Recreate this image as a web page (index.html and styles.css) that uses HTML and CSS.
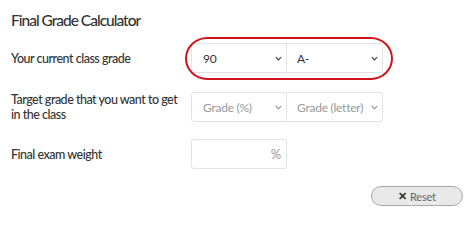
FILE: index.html
```html
<!DOCTYPE html>
<html>
<head>
<meta charset="utf-8">
<link rel="stylesheet" href="styles.css">
</head>
<body>
<div class="calc">
  <h1 class="title">Final Grade Calculator</h1>
  <div class="row row-first">
    <div class="label">Your current class grade</div>
    <div class="pair highlighted">
      <div class="box select"><span class="val">90</span><svg class="chev" viewBox="0 0 8 5"><path d="M1 1l3 3 3-3" fill="none" stroke="#444" stroke-width="1.4"/></svg></div>
      <div class="box select joined"><span class="val">A-</span><svg class="chev" viewBox="0 0 8 5"><path d="M1 1l3 3 3-3" fill="none" stroke="#444" stroke-width="1.4"/></svg></div>
      <div class="ring"></div>
    </div>
  </div>
  <div class="row row-second">
    <div class="label">Target grade that you want to get in the class</div>
    <div class="pair">
      <div class="box select"><span class="ph">Grade (%)</span><svg class="chev" viewBox="0 0 8 5"><path d="M1 1l3 3 3-3" fill="none" stroke="#888" stroke-width="1.2"/></svg></div>
      <div class="box select joined"><span class="ph">Grade (letter)</span><svg class="chev" viewBox="0 0 8 5"><path d="M1 1l3 3 3-3" fill="none" stroke="#888" stroke-width="1.2"/></svg></div>
    </div>
  </div>
  <div class="row row-third">
    <div class="label">Final exam weight</div>
    <div class="box pct"><span class="ph">%</span></div>
  </div>
  <div class="actions">
    <button class="reset"><span class="x">✕</span> Reset</button>
  </div>
</div>
</body>
</html>
```
FILE: styles.css
```css
* { box-sizing: border-box; }
html, body { margin: 0; padding: 0; background: #fff; }
body { font-family: Lato, "Open Sans", sans-serif; color: #333; }
.calc { padding: 9px 11px 0 11px; width: 474px; }
.title { margin: 0; font-size: 15.5px; font-weight: 500; letter-spacing: -1px; line-height: 22px; color: #333; }
.row { display: flex; align-items: center; }
.row-first { margin-top: 12px; }
.row-second { margin-top: 19px; }
.row-third { margin-top: 17px; }
.label { width: 180px; font-size: 12.5px; font-weight: 500; letter-spacing: -0.5px; line-height: 15px; color: #333; padding-right: 4px; }
.pair { display: flex; position: relative; }
.box { width: 96px; height: 30px; border: 1px solid #e2e2e2; border-radius: 3px; background: #fff; display: flex; align-items: center; font-size: 12px; letter-spacing: -0.25px; }
.select { padding: 0 4px 0 11px; justify-content: space-between; }
.pair .box:first-child { border-top-right-radius: 0; border-bottom-right-radius: 0; }
.joined { border-left: none; border-top-left-radius: 0; border-bottom-left-radius: 0; padding-left: 10px; }
.val { color: #333; }
.ph { color: #999; }
.chev { width: 7px; height: 5px; }
.ring { position: absolute; left: -6px; top: -6px; right: -10px; bottom: -7px; border: 2px solid #d0141c; border-radius: 22px / 50%; pointer-events: none; }
.pct { justify-content: flex-end; padding-right: 5px; font-size: 13px; }
.actions { display: flex; justify-content: flex-end; margin-top: 17px; }
.reset { width: 92px; height: 20px; border-radius: 10px; border: 1px solid #a8a8a8; background: #e9e9e9; font-family: Lato, sans-serif; font-size: 11px; letter-spacing: -0.2px; color: #666; display: flex; align-items: center; justify-content: center; gap: 3px; padding: 0; }
.x { font-size: 11px; color: #333; font-weight: 700; }
```
